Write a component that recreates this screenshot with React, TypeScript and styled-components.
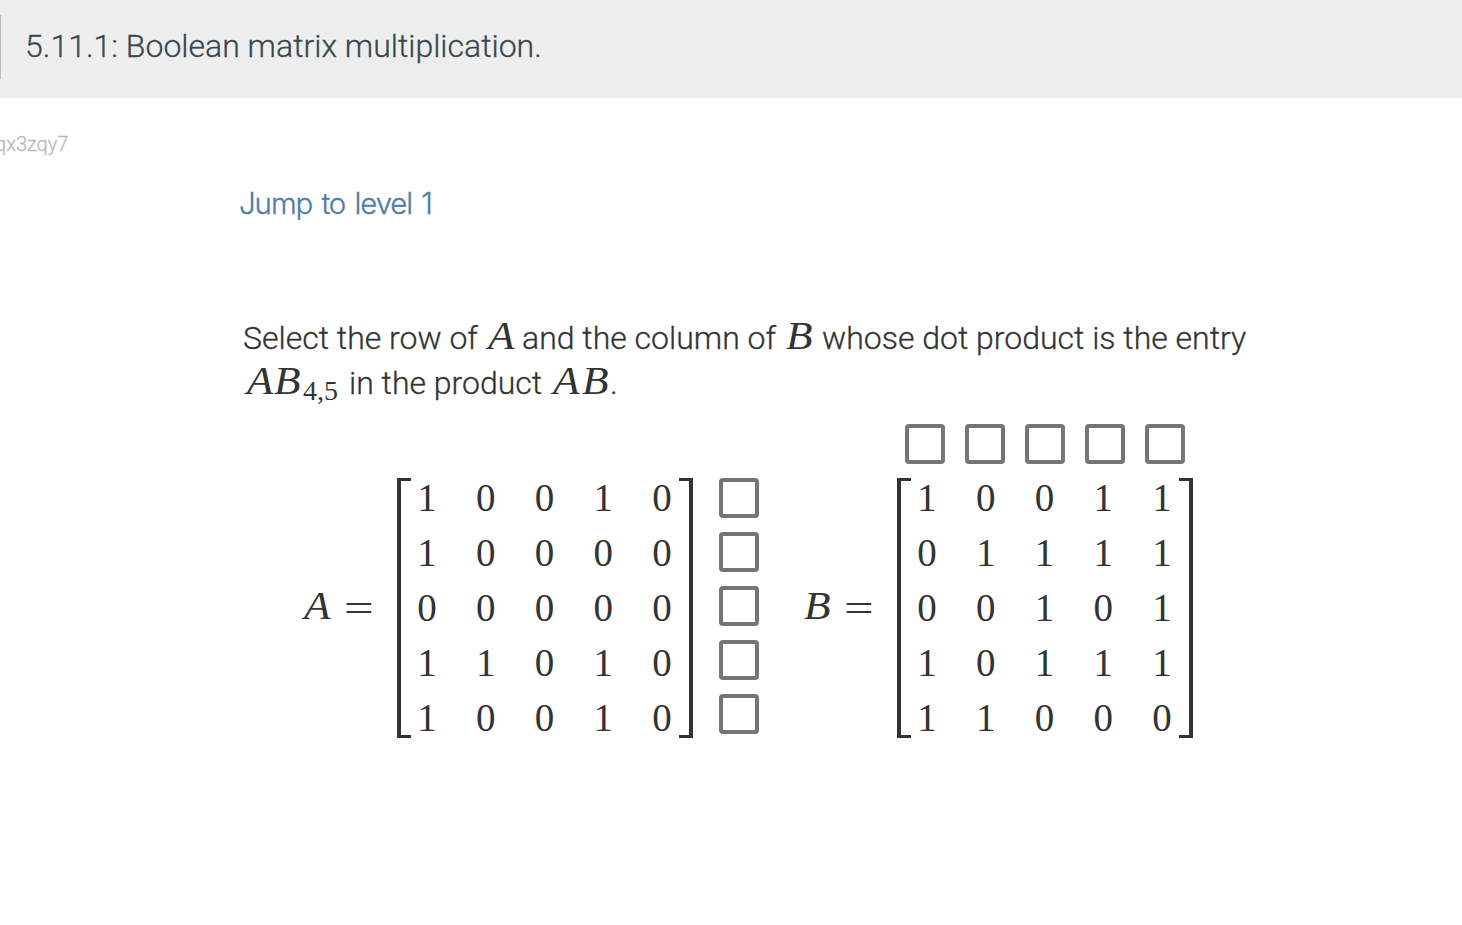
import React from "react"
import styled, { createGlobalStyle } from "styled-components"

const GlobalStyle = createGlobalStyle`
  body {
    margin: 0;
    background: #fff;
    color: #333;
    font-family: Roboto, sans-serif;
    font-weight: 300;
    -webkit-text-stroke: 0.3px;
    overflow: hidden;
  }
`

const Header = styled.header`
  display: flex;
  box-sizing: border-box;
  height: 98px;
  padding-top: 15px;
  background: #eee;
`

const Title = styled.h1`
  height: 64px;
  margin: 0;
  padding-left: 24px;
  border-left: 1px solid #bdbdbd;
  color: #37474f;
  font-size: 32px;
  font-weight: 300;
  line-height: 63px;
  white-space: nowrap;
`

const ActivityId = styled.div`
  margin: 32px 0 0 -5px;
  color: #b9b9b9;
  font-size: 20px;
  line-height: 28px;
`

const LevelLink = styled.a`
  display: block;
  width: max-content;
  margin: 27px 0 0 239px;
  color: #4f7ca6;
  font-family: Inter, sans-serif;
  font-size: 29.5px;
  letter-spacing: -1.1px;
  word-spacing: 2px;
  line-height: 36px;
`

const Question = styled.div`
  margin: 94px 0 0 243px;
`

const Line = styled.div`
  display: flex;
  align-items: baseline;
  height: 45px;
  font-size: 32px;
  line-height: 45px;
  white-space: nowrap;
`

const Words = styled.span<{ $width: number }>`
  width: ${({ $width }) => $width}px;
`

const Variable = styled.i<{ $width?: number }>`
  display: inline-block;
  width: ${({ $width = 28 }) => $width}px;
  font-family: "Liberation Serif", serif;
  font-size: 41px;
  font-weight: 400;
  line-height: 40px;
  -webkit-text-stroke: 0;
  transform: scaleX(1.06);
  transform-origin: left;
`

const Product = styled.span<{ $width: number }>`
  display: flex;
  box-sizing: border-box;
  width: ${({ $width }) => $width}px;
  line-height: 40px;
`

const Subscript = styled.span`
  width: 46px;
  font-family: "Liberation Serif", serif;
  font-size: 28px;
  font-weight: 400;
  line-height: 28px;
  -webkit-text-stroke: 0;
  transform: translateY(6px);
`

const Matrices = styled.div`
  display: flex;
  margin: 19px 0 0 304px;
  -webkit-text-stroke: 0;
`

const Group = styled.section<{ $width?: number }>`
  display: flex;
  width: ${({ $width }) => ($width ? `${$width}px` : "auto")};
`

const Label = styled.div`
  display: flex;
  align-items: center;
  width: 93px;
  height: 260px;
  margin-top: 54px;

  ${Variable} {
    margin-bottom: 6px;
  }
`

const Equals = styled.span`
  margin: 2px 0 0 11px;
  font-family: "Liberation Serif", serif;
  font-size: 39px;
  font-weight: 400;
  line-height: 40px;
  transform: scaleX(1.35);
  transform-origin: left;
`

const Columns = styled.div`
  display: flex;
  gap: 20px;
  height: 54px;
  padding-left: 8px;
`

const Bracketed = styled.div`
  display: flex;
  width: 296px;
  height: 260px;
`

const Bracket = styled.div<{ $right?: boolean }>`
  box-sizing: border-box;
  width: 14px;
  border: solid #333;
  border-width: ${({ $right }) => ($right ? "3px 4px 3px 0" : "3px 0 3px 4px")};
`

const Grid = styled.div`
  display: grid;
  grid-template-columns: repeat(5, 58.8px);
  grid-template-rows: repeat(5, 54.9px);
  width: 268px;
  margin: -7px 0 0;
  text-indent: -27px;
  font-family: "Liberation Serif", serif;
  font-size: 39px;
  font-weight: 400;
  line-height: 54.9px;
  text-align: center;
`

const Rows = styled.div`
  display: flex;
  flex-direction: column;
  gap: 14px;
  margin: 54px 0 0 26px;
`

const Checkbox = styled.input`
  appearance: none;
  box-sizing: border-box;
  flex: none;
  width: 40px;
  height: 40px;
  margin: 0;
  border: 4px solid #757575;
  border-radius: 4px;
  background: #fff;
`

const matrixA = ["10010", "10000", "00000", "11010", "10010"]
const matrixB = ["10011", "01111", "00101", "10111", "11000"]
const indices = [1, 2, 3, 4, 5]

const Matrix = ({ rows }: { rows: string[] }) => (
  <Bracketed>
    <Bracket />
    <Grid>
      {rows.map((row, i) =>
        row.split("").map((value, j) => <span key={`${i}-${j}`}>{value}</span>)
      )}
    </Grid>
    <Bracket $right />
  </Bracketed>
)

const App = () => {
  return (
    <>
      <GlobalStyle />
      <Header>
        <Title>5.11.1: Boolean matrix multiplication.</Title>
      </Header>
      <ActivityId>qx3zqy7</ActivityId>
      <LevelLink>Jump to level 1</LevelLink>
      <Question>
        <Line>
          <Words $width={245}>Select the row of</Words>
          <Variable $width={34}>A</Variable>
          <Words $width={264}>and the column of</Words>
          <Variable $width={36}>B</Variable>
          <Words $width={430}>whose dot product is the entry</Words>
        </Line>
        <Line>
          <Product $width={60}>
            <Variable $width={31}>&#8202;A</Variable>
            <Variable $width={29}>B</Variable>
          </Product>
          <Subscript>4,5</Subscript>
          <Words $width={204}>in the product</Words>
          <Product $width={57}>
            <Variable $width={29}>A</Variable>
            <Variable $width={28}>B</Variable>
          </Product>
          <Words $width={10}>.</Words>
        </Line>
      </Question>
      <Matrices>
        <Group $width={500}>
          <Label>
            <Variable $width={29}>A</Variable>
            <Equals>=</Equals>
          </Label>
          <div>
            <Columns />
            <Matrix rows={matrixA} />
          </div>
          <Rows>
            {indices.map(i => (
              <Checkbox key={i} type="checkbox" aria-label={`Row ${i}`} />
            ))}
          </Rows>
        </Group>
        <Group>
          <Label>
            <Variable $width={29}>B</Variable>
            <Equals>=</Equals>
          </Label>
          <div>
            <Columns>
              {indices.map(i => (
                <Checkbox key={i} type="checkbox" aria-label={`Column ${i}`} />
              ))}
            </Columns>
            <Matrix rows={matrixB} />
          </div>
        </Group>
      </Matrices>
    </>
  )
}

export default App
